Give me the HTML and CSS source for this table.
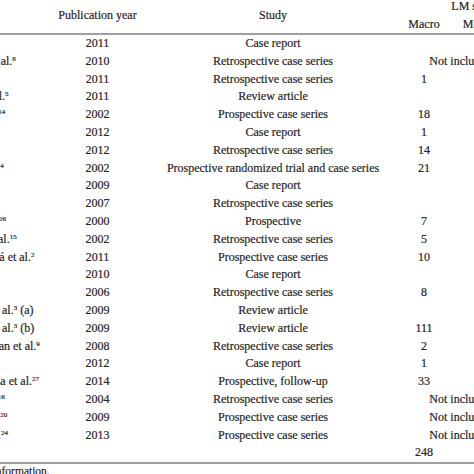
FILE: index.html
```html
<!DOCTYPE html>
<html>
<head>
  <title>LM sclerotherapy studies</title>
  <link rel="stylesheet" href="styles.css">
</head>
<body>
  <div class="sheet">
    <table class="review">
      <colgroup>
        <col class="c-author">
        <col class="c-year">
        <col class="c-study">
        <col class="c-macro">
        <col class="c-micro">
        <col class="c-mixed">
      </colgroup>
      <thead>
        <tr class="top">
          <th rowspan="2" class="author">Author</th>
          <th rowspan="2">Publication year</th>
          <th rowspan="2">Study</th>
          <th colspan="3">LM subtype</th>
        </tr>
        <tr class="sub">
          <th>Macro</th>
          <th>Micro</th>
          <th>Mixed</th>
        </tr>
      </thead>
      <tbody>
        <tr><td class="author">Kato<sup>10</sup></td><td>2011</td><td>Case report</td><td></td><td></td><td></td></tr>
        <tr><td class="author">Svendsen et al.<sup>8</sup></td><td>2010</td><td>Retrospective case series</td><td colspan="2" class="ni">Not included</td><td></td></tr>
        <tr><td class="author">Lee et al.<sup>11</sup></td><td>2011</td><td>Retrospective case series</td><td>1</td><td></td><td></td></tr>
        <tr><td class="author">Giguère et al.<sup>5</sup></td><td>2011</td><td>Review article</td><td></td><td></td><td></td></tr>
        <tr><td class="author">Rautio et al.<sup>14</sup></td><td>2002</td><td>Prospective case series</td><td>18</td><td></td><td></td></tr>
        <tr><td class="author">Tanaka<sup>18</sup></td><td>2012</td><td>Case report</td><td>1</td><td></td><td></td></tr>
        <tr><td class="author">Yoo et al.<sup>22</sup></td><td>2012</td><td>Retrospective case series</td><td>14</td><td></td><td></td></tr>
        <tr><td class="author">Fowler et al.<sup>4</sup></td><td>2002</td><td>Prospective randomized trial and case series</td><td>21</td><td></td><td></td></tr>
        <tr><td class="author">Sung<sup>19</sup></td><td>2009</td><td>Case report</td><td></td><td></td><td></td></tr>
        <tr><td class="author">Ali et al.<sup>1</sup></td><td>2007</td><td>Retrospective case series</td><td></td><td></td><td></td></tr>
        <tr><td class="author">Orford et al.<sup>26</sup></td><td>2000</td><td>Prospective</td><td>7</td><td></td><td></td></tr>
        <tr><td class="author">Kennedy et al.<sup>15</sup></td><td>2002</td><td>Retrospective case series</td><td>5</td><td></td><td></td></tr>
        <tr><td class="author">Kazimierowá et al.<sup>2</sup></td><td>2011</td><td>Prospective case series</td><td>10</td><td></td><td></td></tr>
        <tr><td class="author">Shiels<sup>23</sup></td><td>2010</td><td>Case report</td><td></td><td></td><td></td></tr>
        <tr><td class="author">Ha et al.<sup>12</sup></td><td>2006</td><td>Retrospective case series</td><td>8</td><td></td><td></td></tr>
        <tr><td class="author">Alqahtani et al.<sup>3</sup> (a)</td><td>2009</td><td>Review article</td><td></td><td></td><td></td></tr>
        <tr><td class="author">Alqahtani et al.<sup>3</sup> (b)</td><td>2009</td><td>Review article</td><td>111</td><td></td><td></td></tr>
        <tr><td class="author">Ramchandiran et al.<sup>9</sup></td><td>2008</td><td>Retrospective case series</td><td>2</td><td></td><td></td></tr>
        <tr><td class="author">Riera<sup>17</sup></td><td>2012</td><td>Case report</td><td>1</td><td></td><td></td></tr>
        <tr><td class="author">Pereira Sousa et al.<sup>27</sup></td><td>2014</td><td>Prospective, follow-up</td><td>33</td><td></td><td></td></tr>
        <tr><td class="author">Okada et al.<sup>16</sup></td><td>2004</td><td>Retrospective case series</td><td colspan="2" class="ni">Not included</td><td></td></tr>
        <tr><td class="author">Horton et al.<sup>20</sup></td><td>2009</td><td>Prospective case series</td><td colspan="2" class="ni">Not included</td><td></td></tr>
        <tr><td class="author">Molina et al.<sup>24</sup></td><td>2013</td><td>Prospective case series</td><td colspan="2" class="ni">Not included</td><td></td></tr>
        <tr class="total"><td class="author">Total</td><td></td><td></td><td>248</td><td></td><td></td></tr>
      </tbody>
    </table>
    <p class="note">NI: no information.</p>
  </div>
</body>
</html>
```

FILE: styles.css
```css
body {
  margin: 0;
  padding: 0;
  background-color: #fff;
  color: #262626;
  font-family: "Liberation Serif", "Times New Roman", serif;
  font-size: 12px;
  -webkit-text-stroke: 0.2px #262626;
}

/* Cropped view of the scanned table */
.sheet {
  width: 474px;
  height: 474px;
  overflow: hidden;
}

.review {
  table-layout: fixed;
  width: 620px;
  border-collapse: collapse;
  margin: -4px 0 0 -60px;
}

.c-author { width: 110px; }
.c-year { width: 95px; }
.c-study { width: 256px; }
.c-macro { width: 46px; }
.c-micro { width: 61px; }
.c-mixed { width: 52px; }

.review th,
.review td {
  padding: 0;
  text-align: center;
  font-weight: normal;
  white-space: nowrap;
}

.review thead {
  border-bottom: 2px solid #a0a0a0;
}

.review tbody {
  border-bottom: 2px solid #a0a0a0;
}

.review tr.top th {
  height: 20px;
  line-height: 20px;
}

.review tr.sub th {
  height: 17px;
  line-height: 17px;
}

.review td {
  height: 17.8px;
  line-height: 17.8px;
}

.review .author {
  text-align: left;
}

/* "Not included" spans Macro and Micro */
.review td.ni {
  padding-left: 12px;
}

sup {
  font-size: 7px;
  line-height: 0;
  vertical-align: 4px;
}

.note {
  margin: 0 0 0 -40px;
  font-size: 11.5px;
  line-height: 14px;
  white-space: nowrap;
}
```
